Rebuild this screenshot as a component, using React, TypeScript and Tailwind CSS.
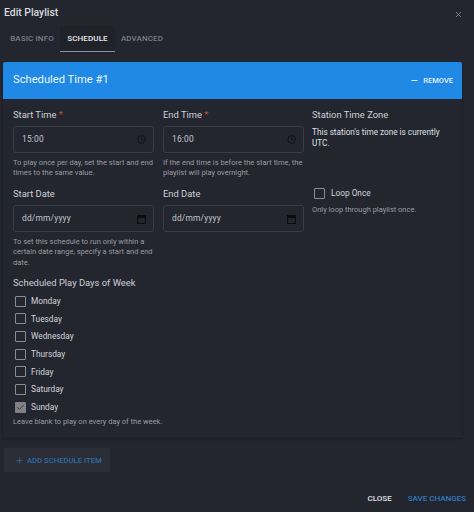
import { Check, Clock, Minus, Plus, X } from "lucide-react";

const days = ["Monday", "Tuesday", "Wednesday", "Thursday", "Friday", "Saturday", "Sunday"];

function Field({ label, required, value, date }: { label: string; required?: boolean; value: string; date?: boolean }) {
  return (
    <div className="flex flex-col">
      <div className="h-[14px] text-[9.4px] leading-[14px] text-[#d0d2d6]">
        {label}
        {required && <span className="text-[#c2504c]"> *</span>}
      </div>
      <div className="mt-[4px] flex h-[27px] items-center justify-between rounded-[3px] border border-[#3a3d47] pl-[8px] pr-[7px] text-[8.4px] tracking-[0.2px] text-[#c4c6cb]">
        <span>{value}</span>
        {date ? (
          <svg width="9" height="10" viewBox="0 0 9 10" className="text-[#0c0d10]">
            <path d="M0.5 1.5h8v8h-8z M0.5 3.2h8" fill="none" stroke="currentColor" strokeWidth="1.2" />
            <path d="M0.5 1.5h8v2h-8z" fill="currentColor" />
          </svg>
        ) : (
          <Clock size={9} strokeWidth={2} className="text-[#0f1014]" />
        )}
      </div>
    </div>
  );
}

function Help({ children, className = "" }: { children: React.ReactNode; className?: string }) {
  return <p className={`text-[7.5px] leading-[10.4px] text-[#9a9ca4] ${className}`}>{children}</p>;
}

function Box({ checked }: { checked?: boolean }) {
  return checked ? (
    <span className="flex h-[11px] w-[11px] items-center justify-center rounded-[1px] bg-[#808185]">
      <Check size={9} strokeWidth={2} className="text-[#22242c]" />
    </span>
  ) : (
    <span className="h-[11px] w-[11px] rounded-[1px] border border-[#8a8c93]" />
  );
}

export default function App() {
  return (
    <div className="flex h-[512px] w-[474px] flex-col overflow-hidden bg-[#23252f] font-['Roboto',sans-serif]">
      <header className="flex h-[26px] items-start justify-between pl-[4px] pr-[11px] pt-[6px]">
        <h1 className="text-[10.4px] leading-[14px] font-medium text-[#d9dade]">Edit Playlist</h1>
        <X size={9} strokeWidth={1.6} className="mt-[4px] text-[#b3b5bb]" />
      </header>

      <nav className="flex h-[26px] items-stretch pl-[4px] text-[8px] font-medium tracking-[0.1px]">
        <span className="flex w-[56px] items-center justify-center text-[#7b7e88]">BASIC INFO</span>
        <span className="flex w-[55px] items-center justify-center border-b border-[#8d909a] bg-[#202229] text-[#e8e9eb]">SCHEDULE</span>
        <span className="flex w-[54px] items-center justify-center text-[#7b7e88]">ADVANCED</span>
      </nav>

      <section className="mt-[10px] ml-[3px] w-[459px] rounded-[2px] bg-[#23252f] shadow-[0_1px_2px_#191a20]">
        <div className="flex h-[37px] items-center justify-between rounded-t-[2px] bg-[#2088e5] pl-[10px] pr-[9px]">
          <h2 className="text-[11.2px] text-[#eef6fd]">Scheduled Time #1</h2>
          <button className="flex items-center gap-[4px] text-[7.5px] font-medium text-[#e3f0fb]">
            <Minus size={9} strokeWidth={2.6} />
            REMOVE
          </button>
        </div>

        <div className="pt-[9px] pr-[8px] pb-[11px] pl-[10px]">
          <div className="grid grid-cols-[141px_141px_141px] gap-x-[9px]">
            <div>
              <Field label="Start Time" required value="15:00" />
              <Help className="mt-[5px] h-[29px]">To play once per day, set the start and end times to the same value.</Help>
            </div>
            <div>
              <Field label="End Time" required value="16:00" />
              <Help className="mt-[5px] h-[29px]">If the end time is before the start time, the playlist will play overnight.</Help>
            </div>
            <div className="-ml-[1px]">
              <div className="h-[14px] text-[9.4px] leading-[14px] text-[#d0d2d6]">Station Time Zone</div>
              <p className="mt-[5px] text-[8.2px] leading-[11px] text-[#dfe0e3]">
                This station's time zone is currently UTC.
              </p>
            </div>

            <div>
              <Field label="Start Date" value="dd/mm/yyyy" date />
              <Help className="mt-[5px]">To set this schedule to run only within a certain date range, specify a start and end date.</Help>
            </div>
            <div>
              <Field label="End Date" value="dd/mm/yyyy" date />
            </div>
            <div className="-ml-[1px]">
              <label className="-mt-[1px] flex h-[14px] items-center gap-[6px] pl-[2px] text-[8.3px] text-[#d4d5d9]">
                <Box />
                Loop Once
              </label>
              <Help className="mt-[5px]">Only loop through playlist once.</Help>
            </div>
          </div>

          <h3 className="mt-[8px] h-[14px] text-[9.4px] leading-[14px] text-[#d0d2d6]">Scheduled Play Days of Week</h3>
          <ul className="mt-[2px] flex flex-col pl-[2px]">
            {days.map((d) => (
              <li key={d} className="flex h-[17.7px] items-center gap-[5px] text-[8.3px] text-[#d4d5d9]">
                <Box checked={d === "Sunday"} />
                {d}
              </li>
            ))}
          </ul>
          <Help className="mt-[1px]">Leave blank to play on every day of the week.</Help>
        </div>
      </section>

      <div className="mt-[10px] ml-[4px]">
        <button className="flex h-[24px] w-[106px] items-center gap-[3px] rounded-[2px] bg-[#2c2e37] pl-[11px] text-[7.7px] font-medium text-[#2d6ca3]">
          <Plus size={9} strokeWidth={2} />
          ADD SCHEDULE ITEM
        </button>
      </div>

      <footer className="mt-auto flex h-[19px] items-start justify-end gap-[16px] pr-[8px] text-[8px] font-medium">
        <span className="leading-[12px] text-[#e2e3e6]">CLOSE</span>
        <span className="leading-[12px] text-[#2d7cc0]">SAVE CHANGES</span>
      </footer>
    </div>
  );
}
